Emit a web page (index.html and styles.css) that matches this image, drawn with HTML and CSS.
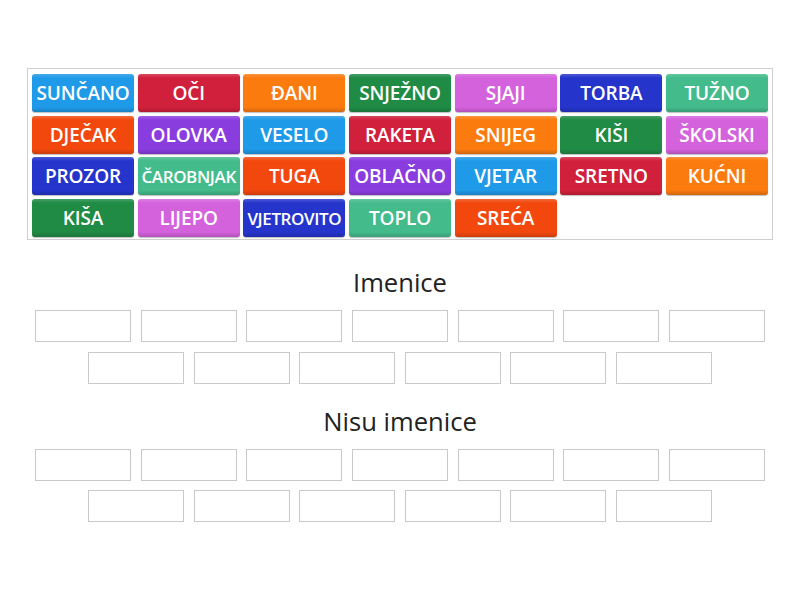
FILE: index.html
```html
<!DOCTYPE html>
<html lang="hr">
<head>
<meta charset="utf-8">
<title>Imenice</title>
<link rel="stylesheet" href="styles.css">
</head>
<body>
<div class="page">
  <div class="bank">
    <div class="tile c-blue">SUNČANO</div>
    <div class="tile c-red">OČI</div>
    <div class="tile c-orange">ĐANI</div>
    <div class="tile c-green">SNJEŽNO</div>
    <div class="tile c-pink">SJAJI</div>
    <div class="tile c-navy">TORBA</div>
    <div class="tile c-teal">TUŽNO</div>

    <div class="tile c-redorange">DJEČAK</div>
    <div class="tile c-purple">OLOVKA</div>
    <div class="tile c-blue">VESELO</div>
    <div class="tile c-red">RAKETA</div>
    <div class="tile c-orange">SNIJEG</div>
    <div class="tile c-green">KIŠI</div>
    <div class="tile c-pink">ŠKOLSKI</div>

    <div class="tile c-navy">PROZOR</div>
    <div class="tile c-teal small">ČAROBNJAK</div>
    <div class="tile c-redorange">TUGA</div>
    <div class="tile c-purple">OBLAČNO</div>
    <div class="tile c-blue">VJETAR</div>
    <div class="tile c-red">SRETNO</div>
    <div class="tile c-orange">KUĆNI</div>

    <div class="tile c-green">KIŠA</div>
    <div class="tile c-pink">LIJEPO</div>
    <div class="tile c-navy small">VJETROVITO</div>
    <div class="tile c-teal">TOPLO</div>
    <div class="tile c-redorange">SREĆA</div>
  </div>

  <section class="group group-first">
    <h2 class="group-title">Imenice</h2>
    <div class="slots">
      <div class="slot"></div><div class="slot"></div><div class="slot"></div><div class="slot"></div><div class="slot"></div><div class="slot"></div><div class="slot"></div>
      <div class="slot"></div><div class="slot"></div><div class="slot"></div><div class="slot"></div><div class="slot"></div><div class="slot"></div>
    </div>
  </section>

  <section class="group group-second">
    <h2 class="group-title">Nisu imenice</h2>
    <div class="slots">
      <div class="slot"></div><div class="slot"></div><div class="slot"></div><div class="slot"></div><div class="slot"></div><div class="slot"></div><div class="slot"></div>
      <div class="slot"></div><div class="slot"></div><div class="slot"></div><div class="slot"></div><div class="slot"></div><div class="slot"></div>
    </div>
  </section>
</div>
</body>
</html>
```

FILE: styles.css
```css
* { box-sizing: border-box; }

html, body {
  margin: 0;
  padding: 0;
  background: #ffffff;
}

body {
  font-family: "Open Sans", "Noto Sans", "DejaVu Sans", sans-serif;
  color: #222;
}

.page {
  width: 800px;
  padding: 68px 27px 0 27px;
}

.bank {
  border: 1px solid #cfcfcf;
  padding: 5px 4px 2px 4px;
  display: grid;
  grid-template-columns: repeat(7, 1fr);
  column-gap: 3.7px;
  row-gap: 3.7px;
}

.tile {
  height: 38px;
  border-radius: 3px;
  display: flex;
  align-items: center;
  justify-content: center;
  color: #ffffff;
  font-weight: 600;
  font-size: 19px;
  letter-spacing: -0.1px;
  white-space: nowrap;
  overflow: hidden;
  background-image: linear-gradient(to bottom,
    rgba(255,255,255,0.18) 0px,
    rgba(255,255,255,0) 4px,
    rgba(0,0,0,0) calc(100% - 5px),
    rgba(0,0,0,0.16) 100%);
  box-shadow: 0 1px 1px rgba(0,0,0,0.25);
}

.tile.small {
  font-size: 17px;
  letter-spacing: -0.4px;
}

.c-blue { background-color: #1f9ae8; }
.c-red { background-color: #d1203c; }
.c-orange { background-color: #fb7b0f; }
.c-green { background-color: #1f8b45; }
.c-pink { background-color: #d462dd; }
.c-navy { background-color: #2535cc; }
.c-teal { background-color: #44bb8b; }
.c-redorange { background-color: #f2480d; }
.c-purple { background-color: #8a3ddf; }

.group {
  display: flex;
  flex-direction: column;
  align-items: center;
}

.group-first { margin-top: 26px; }
.group-second { margin-top: 21px; }

.group-title {
  margin: 0;
  font-size: 25.6px;
  font-weight: 400;
  line-height: 33px;
  color: #222;
}

.slots {
  margin-top: 11px;
  width: 746px;
  display: flex;
  flex-wrap: wrap;
  justify-content: center;
  column-gap: 9.67px;
  row-gap: 9.5px;
}

.slot {
  width: 96px;
  height: 32px;
  border: 1px solid #c9c9c9;
  background: #ffffff;
}
```
